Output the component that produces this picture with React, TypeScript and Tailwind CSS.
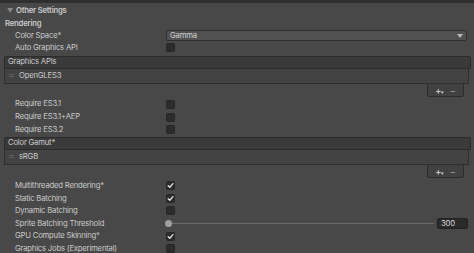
import React from 'react';

const Checkbox = ({ checked = false }: { checked?: boolean }) => (
  <div className="flex h-[9px] w-[9px] items-center justify-center rounded-[1.5px] border border-[#262626] bg-[#2c2c2c]">
    {checked && (
      <svg width="7" height="7" viewBox="0 0 8 8">
        <path d="M1.3 4.3 L3.2 6 L6.8 1.8" fill="none" stroke="#e8e8e8" strokeWidth="1.4" strokeLinecap="round" strokeLinejoin="round" />
      </svg>
    )}
  </div>
);

const Row = ({ label, h = 'h-[12.6px]', children }: { label: string; h?: string; children?: React.ReactNode }) => (
  <div className={`flex items-center ${h}`}>
    <div className="w-[166px] shrink-0 pl-[15px] whitespace-nowrap">{label}</div>
    <div className="flex flex-1 items-center">{children}</div>
  </div>
);

const ReorderList = ({ title, item }: { title: string; item: string }) => (
  <div className="flex flex-col pl-[4px] pr-[3px]">
    <div className="flex h-[13px] items-center rounded-t-[2px] border border-[#2b2b2b] bg-[#3a3a3a] pl-[3px]">{title}</div>
    <div className="mr-[2px] flex h-[15px] items-center border-x border-b border-[#2e2e2e] bg-[#434343]">
      <div className="ml-[4px] mr-[5px] flex w-[5px] flex-col gap-[1px]">
        <div className="h-px bg-[#5e5e5e]" />
        <div className="h-px bg-[#5e5e5e]" />
      </div>
      {item}
    </div>
    <div className="flex justify-end pr-[7px]">
      <div className="flex h-[13px] w-[37px] items-center justify-center gap-[8px] rounded-b-[3px] border-x border-b border-[#2c2c2c] bg-[#414141] text-[#d8d8d8]">
        <span className="relative text-[10px] leading-none">
          +<span className="absolute -right-[2px] bottom-0 text-[5px]">▾</span>
        </span>
        <span className="text-[10px] leading-none text-[#9a9a9a]">−</span>
      </div>
    </div>
  </div>
);

export default function App() {
  return (
    <div className="h-[253px] w-[474px] overflow-hidden bg-[#484848] text-[7.7px] tracking-[-0.2px] text-[#cacaca] [font-family:Inter,'Liberation_Sans',sans-serif]">
      <div className="h-[3px] bg-[#2f2f2f]" />
      <div className="flex h-[15px] items-center pl-[7px] font-semibold">
        <span className="mr-[3px] text-[6px] text-[#8a8a8a]">▼</span>
        Other Settings
      </div>
      <div className="flex h-[12px] items-center pl-[5px] font-semibold">Rendering</div>
      <Row label="Color Space*" h="h-[11.5px]">
        <div className="flex h-[11px] w-[301px] items-center justify-between rounded-[2px] border border-[#303030] bg-[#515151] pl-[3px] pr-[3px] text-[#d4d4d4]">
          Gamma
          <svg width="6" height="4" viewBox="0 0 6 4">
            <path d="M0 0 H6 L3 4 Z" fill="#b8b8b8" />
          </svg>
        </div>
      </Row>
      <Row label="Auto Graphics API" h="h-[12px]">
        <Checkbox />
      </Row>
      <div className="h-[2px]" />
      <ReorderList title="Graphics APIs" item="OpenGLES3" />
      <div className="h-[1px]" />
      <Row label="Require ES3.1" h="h-[13px]">
        <Checkbox />
      </Row>
      <Row label="Require ES3.1+AEP" h="h-[13px]">
        <Checkbox />
      </Row>
      <Row label="Require ES3.2" h="h-[12.5px]">
        <Checkbox />
      </Row>
      <div className="h-[0.5px]" />
      <ReorderList title="Color Gamut*" item="sRGB" />
      <div className="h-[2px]" />
      <Row label="Multithreaded Rendering*">
        <Checkbox checked />
      </Row>
      <Row label="Static Batching">
        <Checkbox checked />
      </Row>
      <Row label="Dynamic Batching">
        <Checkbox />
      </Row>
      <Row label="Sprite Batching Threshold">
        <div className="flex flex-1 items-center pr-[6px]">
          <div className="relative flex flex-1 items-center">
            <div className="h-px flex-1 bg-[#6a6a6a]" />
            <div className="absolute -left-[1px] h-[7px] w-[7px] rounded-full bg-[#a0a0a0]" />
          </div>
          <div className="ml-[3px] flex h-[11px] w-[31px] items-center rounded-[2px] border border-[#222] bg-[#2a2a2a] pl-[3px] text-[#d8d8d8]">300</div>
        </div>
      </Row>
      <Row label="GPU Compute Skinning*">
        <Checkbox checked />
      </Row>
      <Row label="Graphics Jobs (Experimental)">
        <Checkbox />
      </Row>
    </div>
  );
}
